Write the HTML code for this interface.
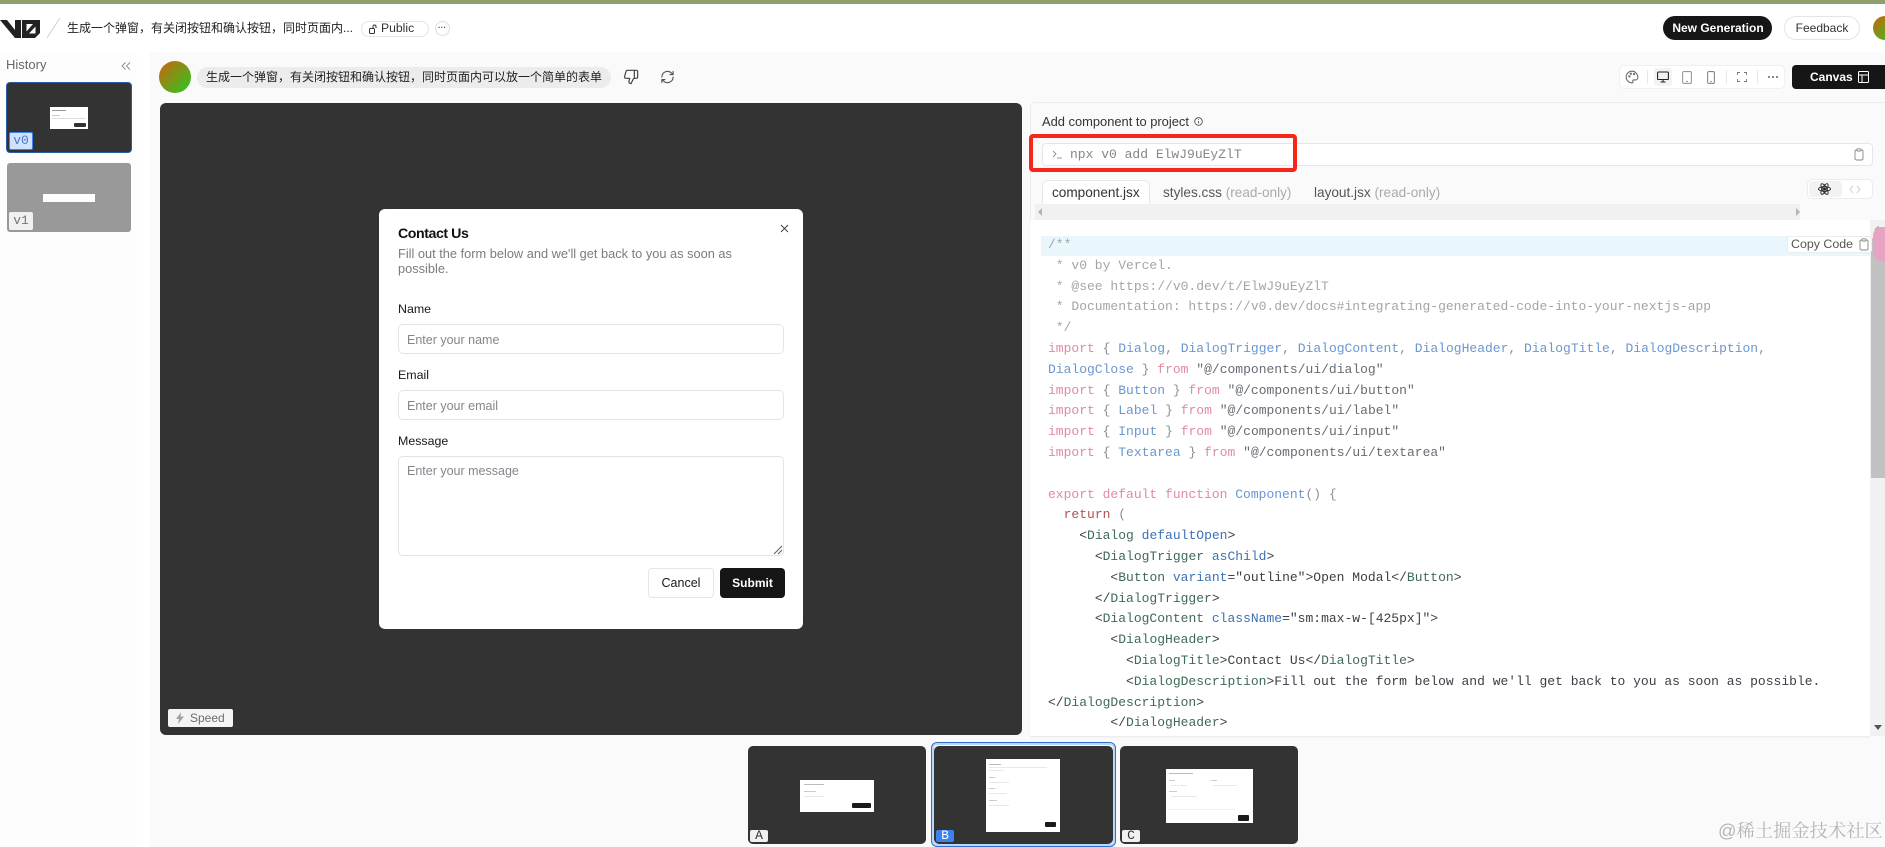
<!DOCTYPE html>
<html lang="zh">
<head>
<meta charset="utf-8">
<title>v0</title>
<style>
*{box-sizing:border-box}
html,body{margin:0;padding:0;width:1885px;height:847px;overflow:hidden;background:#fff;font-family:"Liberation Sans","Noto Sans CJK SC",sans-serif;color:#18181b}
.a{position:absolute}
.t{position:absolute;white-space:nowrap}
.mono{font-family:"Liberation Mono","Noto Sans CJK SC",monospace}
pre{margin:0;font-family:"Liberation Mono",monospace;font-size:13px;line-height:20.8px;color:#444}
.c{color:#a3a5a9}.k{color:#e28a9f}.b{color:#6a97cf}.s{color:#666c73}.r{color:#b4514f}.g{color:#3f6a55}.at{color:#3b72b5}.x{color:#3a3f45}
.p{color:#8b8f94}
.fi{position:absolute;left:398px;width:386px;background:#fff;border:1px solid #e4e4e7;border-radius:5px}
.lab{position:absolute;left:398px;font-size:12.4px;line-height:16px;color:#18181b;white-space:nowrap}
.ph{position:absolute;left:407px;font-size:12.5px;line-height:16px;color:#85858c;white-space:nowrap}
.thumb{position:absolute;background:#333;border-radius:5px}
.ln{position:absolute;background:#e8e8e8;height:1px}
.bk{position:absolute;background:#1a1a1a;border-radius:1px}
</style>
</head>
<body>
<!-- top strip -->
<div class="a" style="left:0;top:0;width:1885px;height:4px;background:#8f9e6d"></div>

<!-- main backgrounds -->
<div class="a" style="left:0;top:52px;width:137px;height:795px;background:#fdfdfd"></div>
<div class="a" style="left:150px;top:52px;width:1735px;height:795px;background:#fafafa"></div>

<!-- header -->
<svg class="a" style="left:0;top:17px" width="42" height="22" viewBox="0 0 42 22">
<path d="M0 3h7l8 10V3h6v18h-6z" fill="#222"/>
<path d="M22 3h18v13l-5 5H22zM26.500 7v7.500L33 7zM35.500 9.500L29 16.500h6.500z" fill="#222" fill-rule="evenodd"/>
</svg>
<svg class="a" style="left:46px;top:17px" width="16" height="22"><path d="M1 21L14 1" stroke="#cfcfcf" stroke-width="1"/></svg>
<div class="t" style="left:67px;top:18px;font-size:12px;line-height:20px;color:#222">生成一个弹窗，有关闭按钮和确认按钮，同时页面内...</div>
<div class="a" style="left:361px;top:21px;width:68px;height:16px;border:1px solid #e5e5e5;border-radius:8px"></div>
<svg class="a" style="left:368px;top:24px" width="11" height="11" viewBox="0 0 11 11" fill="none" stroke="#333" stroke-width="1"><rect x="1.500" y="4.500" width="5" height="5" rx="1"/><path d="M5 4.500V2.500a1.500 1.500 0 0 1 3 0V4"/></svg>
<div class="t" style="left:381px;top:20px;font-size:12.2px;line-height:17px;color:#333">Public</div>
<div class="a" style="left:435px;top:21px;width:15px;height:15px;border:1px solid #ddd;border-radius:50%"></div>
<div class="t" style="left:438px;top:22px;font-size:8px;line-height:12px;font-weight:bold;color:#444">···</div>

<div class="a" style="left:1663px;top:16px;width:109px;height:24px;background:#161616;border-radius:12px"></div>
<div class="t" style="left:1672px;top:16px;width:92px;text-align:center;font-size:12px;font-weight:bold;line-height:24px;color:#fff">New Generation</div>
<div class="a" style="left:1784px;top:16px;width:76px;height:24px;border:1px solid #e5e5e5;border-radius:12px;background:#fff"></div>
<div class="t" style="left:1784px;top:16px;width:76px;text-align:center;font-size:12px;line-height:24px;color:#333">Feedback</div>
<div class="a" style="left:1873px;top:16px;width:24px;height:24px;border-radius:50%;background:linear-gradient(135deg,#c8650f,#2fc71f)"></div>

<!-- history sidebar -->
<div class="t" style="left:6px;top:56px;font-size:13px;line-height:18px;color:#66666b">History</div>
<svg class="a" style="left:121px;top:61px" width="10" height="10" viewBox="0 0 10 10" fill="none" stroke="#888" stroke-width=".9"><path d="M4.500 1.500L1 5l3.500 3.500M9 1.500L5.500 5 9 8.500"/></svg>

<div class="a" style="left:6px;top:82px;width:126px;height:71px;background:#333;border:1px solid #2b5aa8;border-radius:4px"></div>
<div class="a" style="left:50px;top:107px;width:38px;height:22px;background:#fff"></div>
<div class="ln" style="left:52px;top:110px;width:14px;background:#999"></div>
<div class="ln" style="left:52px;top:115px;width:8px;background:#ccc"></div>
<div class="ln" style="left:52px;top:118px;width:34px;background:#ddd"></div>
<div class="bk" style="left:74px;top:123px;width:12px;height:4px;background:#333"></div>
<div class="a" style="left:9px;top:132px;width:24px;height:18px;background:#cfe2ff;border:1px solid #3f84ea;border-radius:2px"></div>
<div class="t mono" style="left:9px;top:132px;width:24px;text-align:center;font-size:13px;line-height:18px;color:#4a79c4">v0</div>

<div class="a" style="left:7px;top:163px;width:124px;height:69px;background:#999;border-radius:3px"></div>
<div class="a" style="left:43px;top:194px;width:52px;height:8px;background:#fdfdfd"></div>
<div class="a" style="left:9px;top:212px;width:24px;height:18px;background:#f1f1f1;border-radius:2px"></div>
<div class="t mono" style="left:9px;top:212px;width:24px;text-align:center;font-size:13px;line-height:18px;color:#777">v1</div>

<!-- prompt row -->
<div class="a" style="left:159px;top:61px;width:32px;height:32px;border-radius:50%;background:linear-gradient(135deg,#cf6210,#25cc20)"></div>
<div class="a" style="left:197px;top:67px;width:414px;height:21px;background:#ececec;border-radius:11px"></div>
<div class="t" style="left:206px;top:67px;font-size:12px;line-height:21px;color:#222">生成一个弹窗，有关闭按钮和确认按钮，同时页面内可以放一个简单的表单</div>
<svg class="a" style="left:623px;top:69px" width="16" height="16" viewBox="0 0 24 24" fill="none" stroke="#444" stroke-width="1.800" stroke-linecap="round" stroke-linejoin="round"><path d="M17 14V2M9 18.100L10 14H4.200a2 2 0 0 1-1.900-2.500l2.300-8A2 2 0 0 1 6.500 2H20a2 2 0 0 1 2 2v8a2 2 0 0 1-2 2h-2.800a2 2 0 0 0-1.800 1.100L12 22a3 3 0 0 1-3-3.900z"/></svg>
<svg class="a" style="left:660px;top:69px" width="15" height="16" viewBox="0 0 24 24" fill="none" stroke="#555" stroke-width="1.800" stroke-linecap="round" stroke-linejoin="round"><path d="M3 12a9 9 0 0 1 15-6.700L21 8M21 3v5h-5M21 12a9 9 0 0 1-15 6.700L3 16M8 16H3v5"/></svg>

<!-- toolbar -->
<div class="a" style="left:1619px;top:65px;width:166px;height:24px;background:#fff;border:1px solid #f0f0f0;border-radius:5px"></div>
<svg class="a" style="left:1625px;top:70px" width="14" height="14" viewBox="0 0 24 24" fill="none" stroke="#666" stroke-width="1.800"><path d="M12 2a10 10 0 1 0 0 20c1.700 0 2-1.300 1.500-2.500-.6-1.300.2-2.500 1.500-2.500h3a4 4 0 0 0 4-4c0-6-4.500-11-10-11z"/><circle cx="7.500" cy="11" r="1"/><circle cx="10" cy="6.500" r="1"/><circle cx="15.500" cy="7" r="1"/></svg>
<div class="a" style="left:1647px;top:70px;width:1px;height:14px;background:#e8e8e8"></div>
<div class="a" style="left:1654px;top:68px;width:18px;height:18px;background:#f3f3f3;border-radius:3px"></div>
<svg class="a" style="left:1657px;top:71px" width="12" height="12" viewBox="0 0 12 12" fill="none" stroke="#222" stroke-width="1.100"><rect x=".6" y="1" width="10.800" height="7.500" rx=".8"/><path d="M6 8.500V11M3.500 11h5"/></svg>
<svg class="a" style="left:1682px;top:71px" width="10" height="13" viewBox="0 0 10 13" fill="none" stroke="#999" stroke-width="1.100"><rect x=".6" y=".6" width="8.800" height="11.800" rx="1.200"/><path d="M4 10.500h2"/></svg>
<svg class="a" style="left:1707px;top:71px" width="8" height="13" viewBox="0 0 8 13" fill="none" stroke="#888" stroke-width="1.100"><rect x=".6" y=".6" width="6.800" height="11.800" rx="1.200"/><path d="M3.200 10.500h1.600"/></svg>
<div class="a" style="left:1726px;top:70px;width:1px;height:14px;background:#e8e8e8"></div>
<svg class="a" style="left:1737px;top:72px" width="10" height="10" viewBox="0 0 10 10" fill="none" stroke="#777" stroke-width=".9"><path d="M.5 3V.5H3M7 .5h2.500V3M9.500 7v2.500H7M3 9.500H.5V7"/></svg>
<div class="a" style="left:1757px;top:70px;width:1px;height:14px;background:#e8e8e8"></div>
<div class="a" style="left:1768px;top:76px;width:2px;height:2px;background:#888;box-shadow:4px 0 #888,8px 0 #888"></div>
<div class="a" style="left:1792px;top:65px;width:100px;height:24px;background:#161616;border-radius:4px"></div>
<div class="t" style="left:1810px;top:65px;font-size:12px;font-weight:bold;line-height:24px;color:#fff">Canvas</div>
<svg class="a" style="left:1858px;top:71px" width="11" height="12" viewBox="0 0 11 12" fill="none" stroke="#fff" stroke-width="1"><rect x=".5" y=".5" width="10" height="11" rx="1"/><path d="M.5 4h10M4 4v7.500"/></svg>

<!-- canvas preview -->
<div class="a" style="left:160px;top:103px;width:862px;height:632px;background:#333;border-radius:6px"></div>

<!-- modal -->
<div class="a" style="left:379px;top:209px;width:424px;height:420px;background:#fff;border-radius:6px"></div>
<div class="t" style="left:398px;top:225px;font-size:14.2px;font-weight:bold;line-height:18px;letter-spacing:-.45px;color:#111">Contact Us</div>
<div class="t" style="left:398px;top:246px;font-size:12.8px;line-height:16px;color:#7b7b82">Fill out the form below and we'll get back to you as soon as</div>
<div class="t" style="left:398px;top:261px;font-size:12.8px;line-height:16px;color:#7b7b82">possible.</div>
<svg class="a" style="left:780px;top:224px" width="9" height="9" viewBox="0 0 9 9" stroke="#444" stroke-width="1"><path d="M1 1l7 7M8 1L1 8"/></svg>

<div class="lab" style="top:301px">Name</div>
<div class="fi" style="top:324px;height:30px"></div>
<div class="ph" style="top:332px">Enter your name</div>
<div class="lab" style="top:367px">Email</div>
<div class="fi" style="top:390px;height:30px"></div>
<div class="ph" style="top:398px">Enter your email</div>
<div class="lab" style="top:433px">Message</div>
<div class="fi" style="top:456px;height:100px"></div>
<div class="ph" style="top:463px">Enter your message</div>
<svg class="a" style="left:773px;top:545px" width="11" height="10" stroke="#555" stroke-width=".9"><path d="M1 9L9 1M5 9l4-4"/></svg>
<div class="a" style="left:648px;top:568px;width:66px;height:30px;background:#fff;border:1px solid #e6e6e6;border-radius:4px"></div>
<div class="t" style="left:648px;top:568px;width:66px;text-align:center;font-size:12.5px;line-height:30px;color:#18181b">Cancel</div>
<div class="a" style="left:720px;top:568px;width:65px;height:30px;background:#161616;border-radius:4px"></div>
<div class="t" style="left:720px;top:568px;width:65px;text-align:center;font-size:12px;font-weight:bold;line-height:30px;color:#fff">Submit</div>

<!-- speed -->
<div class="a" style="left:168px;top:709px;width:65px;height:18px;background:#f4f4f4;border-radius:2px"></div>
<svg class="a" style="left:176px;top:712px" width="8" height="12" viewBox="0 0 8 12"><path d="M5 0L0 7h3l-1 5 6-7.500H4.500z" fill="#a0a0a0"/></svg>
<div class="t" style="left:190px;top:709px;font-size:12px;line-height:18px;color:#6c6c6c">Speed</div>

<!-- right panel -->
<div class="a" style="left:1030px;top:102px;width:855px;height:634px;background:#fafafa;border:1px solid #ececec;border-right:0;border-bottom:0;border-radius:5px 0 0 0"></div>
<div class="t" style="left:1042px;top:113px;font-size:12.9px;line-height:18px;color:#333">Add component to project</div>
<svg class="a" style="left:1194px;top:117px" width="9" height="9" viewBox="0 0 9 9" fill="none" stroke="#444" stroke-width=".8"><circle cx="4.500" cy="4.500" r="3.800"/><path d="M4.500 4v2.500M4.500 2.200v.8"/></svg>
<div class="a" style="left:1042px;top:143px;width:831px;height:23px;background:#fff;border:1px solid #e6e6e6;border-radius:4px"></div>
<svg class="a" style="left:1052px;top:149px" width="11" height="11" viewBox="0 0 11 11" fill="none" stroke="#777" stroke-width=".8"><path d="M1 2l3 3-3 3M5 9h5"/></svg>
<div class="t mono" style="left:1070px;top:143px;font-size:13px;line-height:23px;color:#868686">npx v0 add ElwJ9uEyZlT</div>
<svg class="a" style="left:1854px;top:148px" width="10" height="13" viewBox="0 0 10 13" fill="none" stroke="#888" stroke-width=".9"><rect x="1" y="2" width="8" height="10" rx="1.500"/><rect x="3" y=".8" width="4" height="2.200" rx=".6" fill="#fff"/></svg>
<!-- red box -->
<div class="a" style="left:1029px;top:134px;width:268px;height:38px;border:4px solid #f6261b;border-radius:4px"></div>

<!-- tabs -->
<div class="a" style="left:1042px;top:180px;width:108px;height:26px;background:#fff;border:1px solid #e8e8e8;border-bottom:0;border-radius:6px 6px 0 0"></div>
<div class="t" style="left:1052px;top:184px;font-size:13.6px;line-height:18px;color:#333">component.jsx</div>
<div class="t" style="left:1163px;top:184px;font-size:13.6px;line-height:18px;color:#555">styles.css <span style="color:#aaa">(read-only)</span></div>
<div class="t" style="left:1314px;top:184px;font-size:13.6px;line-height:18px;color:#555">layout.jsx <span style="color:#aaa">(read-only)</span></div>
<div class="a" style="left:1807px;top:179px;width:66px;height:20px;background:#fff;border:1px solid #ececec;border-radius:5px"></div>
<div class="a" style="left:1809px;top:181px;width:33px;height:16px;background:#f2f2f2;border-radius:4px"></div>
<svg class="a" style="left:1818px;top:183px" width="13" height="12" viewBox="0 0 13 12" fill="none" stroke="#222" stroke-width=".9"><ellipse cx="6.500" cy="6" rx="6" ry="2.300"/><ellipse cx="6.500" cy="6" rx="6" ry="2.300" transform="rotate(60 6.500 6)"/><ellipse cx="6.500" cy="6" rx="6" ry="2.300" transform="rotate(120 6.500 6)"/><circle cx="6.500" cy="6" r="1" fill="#222"/></svg>
<svg class="a" style="left:1849px;top:185px" width="12" height="9" fill="none" stroke="#c8c8c8" stroke-width=".9"><path d="M4 1L1 4.500 4 8M8 1l3 3.500L8 8"/></svg>
<!-- horizontal scrollbar -->
<div class="a" style="left:1035px;top:204px;width:765px;height:16px;background:#f1f1f1"></div>
<div class="a" style="left:1038px;top:208px;width:0;height:0;border:4px solid transparent;border-left:0;border-right:4px solid #b5b5b5"></div>
<div class="a" style="left:1796px;top:208px;width:0;height:0;border:4px solid transparent;border-right:0;border-left:4px solid #b5b5b5"></div>
<div class="a" style="left:1800px;top:220px;width:85px;height:1px;background:#ececec"></div>

<!-- code area -->
<div class="a" style="left:1030px;top:220px;width:840px;height:516px;background:#fff;box-shadow:0 1px 2px rgba(0,0,0,.08)"></div>
<div class="a" style="left:1041px;top:236px;width:829px;height:20px;background:#e9f7fd"></div>
<div class="a" style="left:1048px;top:235px;width:822px;height:501px;overflow:hidden">
<pre><span class="c">/**
 * v0 by Vercel.
 * @see https://v0.dev/t/ElwJ9uEyZlT
 * Documentation: https://v0.dev/docs#integrating-generated-code-into-your-nextjs-app
 */</span>
<span class="k">import</span> <span class="p">{</span> <span class="b">Dialog</span><span class="p">,</span> <span class="b">DialogTrigger</span><span class="p">,</span> <span class="b">DialogContent</span><span class="p">,</span> <span class="b">DialogHeader</span><span class="p">,</span> <span class="b">DialogTitle</span><span class="p">,</span> <span class="b">DialogDescription</span><span class="p">,</span>
<span class="b">DialogClose</span> <span class="p">}</span> <span class="k">from</span> <span class="s">"@/components/ui/dialog"</span>
<span class="k">import</span> <span class="p">{</span> <span class="b">Button</span> <span class="p">}</span> <span class="k">from</span> <span class="s">"@/components/ui/button"</span>
<span class="k">import</span> <span class="p">{</span> <span class="b">Label</span> <span class="p">}</span> <span class="k">from</span> <span class="s">"@/components/ui/label"</span>
<span class="k">import</span> <span class="p">{</span> <span class="b">Input</span> <span class="p">}</span> <span class="k">from</span> <span class="s">"@/components/ui/input"</span>
<span class="k">import</span> <span class="p">{</span> <span class="b">Textarea</span> <span class="p">}</span> <span class="k">from</span> <span class="s">"@/components/ui/textarea"</span>

<span class="k">export default function</span> <span class="b">Component</span><span class="p">() {</span>
  <span class="r">return</span> <span class="p">(</span>
    <span class="x">&lt;</span><span class="g">Dialog</span> <span class="at">defaultOpen</span><span class="x">&gt;</span>
      <span class="x">&lt;</span><span class="g">DialogTrigger</span> <span class="at">asChild</span><span class="x">&gt;</span>
        <span class="x">&lt;</span><span class="g">Button</span> <span class="at">variant</span><span class="x">="outline"&gt;Open Modal&lt;/</span><span class="g">Button</span><span class="x">&gt;</span>
      <span class="x">&lt;/</span><span class="g">DialogTrigger</span><span class="x">&gt;</span>
      <span class="x">&lt;</span><span class="g">DialogContent</span> <span class="at">className</span><span class="x">="sm:max-w-[425px]"&gt;</span>
        <span class="x">&lt;</span><span class="g">DialogHeader</span><span class="x">&gt;</span>
          <span class="x">&lt;</span><span class="g">DialogTitle</span><span class="x">&gt;Contact Us&lt;/</span><span class="g">DialogTitle</span><span class="x">&gt;</span>
          <span class="x">&lt;</span><span class="g">DialogDescription</span><span class="x">&gt;Fill out the form below and we'll get back to you as soon as possible.</span>
<span class="x">&lt;/</span><span class="g">DialogDescription</span><span class="x">&gt;</span>
        <span class="x">&lt;/</span><span class="g">DialogHeader</span><span class="x">&gt;</span>
</pre>
</div>

<!-- vertical scrollbar -->
<div class="a" style="left:1870px;top:220px;width:15px;height:516px;background:#f1f1f1"></div>
<div class="a" style="left:1871px;top:238px;width:14px;height:240px;background:#c1c1c1"></div>
<div class="a" style="left:1874px;top:226px;width:0;height:0;border:4px solid transparent;border-top:0;border-bottom:4px solid #a5a5a5"></div>
<div class="a" style="left:1873px;top:227px;width:18px;height:34px;background:#e6a4c2;border-radius:9px 0 0 9px"></div>
<div class="a" style="left:1874px;top:725px;width:0;height:0;border:4px solid transparent;border-bottom:0;border-top:5px solid #555"></div>

<!-- copy code -->
<div class="a" style="left:1787px;top:236px;width:85px;height:17px;background:#fff;border:1px solid #ececec;border-radius:3px"></div>
<div class="t" style="left:1791px;top:236px;font-size:12.4px;line-height:17px;color:#555">Copy Code</div>
<svg class="a" style="left:1859px;top:238px" width="10" height="13" viewBox="0 0 10 13" fill="none" stroke="#888" stroke-width=".9"><rect x="1" y="2" width="8" height="10" rx="1.500"/><rect x="3" y=".8" width="4" height="2.200" rx=".6" fill="#fff"/></svg>

<!-- bottom variants -->
<div class="thumb" style="left:748px;top:746px;width:178px;height:98px"></div>
<div class="a" style="left:800px;top:780px;width:74px;height:32px;background:#fff"></div>
<div class="ln" style="left:804px;top:784px;width:20px;background:#bbb"></div>
<div class="ln" style="left:804px;top:791px;width:12px;background:#ccc"></div>
<div class="ln" style="left:804px;top:796px;width:20px"></div>
<div class="bk" style="left:852px;top:803px;width:19px;height:5px"></div>
<div class="a" style="left:750px;top:830px;width:18px;height:12px;background:#f1f1f1;border-radius:2px"></div>
<div class="t mono" style="left:750px;top:830px;width:18px;text-align:center;font-size:13px;line-height:12px;color:#333">A</div>

<div class="a" style="left:931px;top:742px;width:185px;height:105px;border:1px solid #2f6fd0;box-shadow:inset 0 0 0 2px #b9d6fb;border-radius:6px"></div>
<div class="thumb" style="left:934px;top:746px;width:179px;height:98px"></div>
<div class="a" style="left:986px;top:759px;width:74px;height:73px;background:#fff"></div>
<div class="ln" style="left:989px;top:764px;width:12px;background:#bbb"></div>
<div class="ln" style="left:989px;top:767px;width:58px"></div>
<div class="ln" style="left:989px;top:770px;width:15px"></div>
<div class="ln" style="left:989px;top:777px;width:6px;background:#ccc"></div>
<div class="ln" style="left:989px;top:782px;width:20px"></div>
<div class="ln" style="left:989px;top:788px;width:6px;background:#ccc"></div>
<div class="ln" style="left:989px;top:793px;width:18px"></div>
<div class="ln" style="left:989px;top:800px;width:8px;background:#ccc"></div>
<div class="ln" style="left:989px;top:805px;width:20px"></div>
<div class="bk" style="left:1045px;top:822px;width:11px;height:5px"></div>
<div class="a" style="left:936px;top:830px;width:18px;height:12px;background:#3b82f0;border-radius:2px"></div>
<div class="t mono" style="left:936px;top:830px;width:18px;text-align:center;font-size:13px;line-height:12px;color:#fff">B</div>

<div class="thumb" style="left:1120px;top:746px;width:178px;height:98px"></div>
<div class="a" style="left:1166px;top:769px;width:87px;height:54px;background:#fff"></div>
<div class="ln" style="left:1169px;top:773px;width:24px;background:#bbb"></div>
<div class="ln" style="left:1169px;top:780px;width:6px;background:#ccc"></div>
<div class="ln" style="left:1211px;top:780px;width:6px;background:#ccc"></div>
<div class="ln" style="left:1171px;top:785px;width:16px"></div>
<div class="ln" style="left:1213px;top:785px;width:24px"></div>
<div class="ln" style="left:1169px;top:791px;width:8px;background:#ccc"></div>
<div class="ln" style="left:1171px;top:796px;width:26px"></div>
<div class="ln" style="left:1169px;top:809px;width:66px;background:#f0f0f0"></div>
<div class="bk" style="left:1238px;top:815px;width:11px;height:6px"></div>
<div class="a" style="left:1122px;top:830px;width:18px;height:12px;background:#f1f1f1;border-radius:2px"></div>
<div class="t mono" style="left:1122px;top:830px;width:18px;text-align:center;font-size:13px;line-height:12px;color:#333">C</div>

<!-- watermark -->
<div class="t" style="left:1718px;top:819px;font-family:'Liberation Sans','Noto Serif CJK SC',serif;font-size:18.3px;line-height:24px;color:#b5b5b5">@稀土掘金技术社区</div>
</body>
</html>
